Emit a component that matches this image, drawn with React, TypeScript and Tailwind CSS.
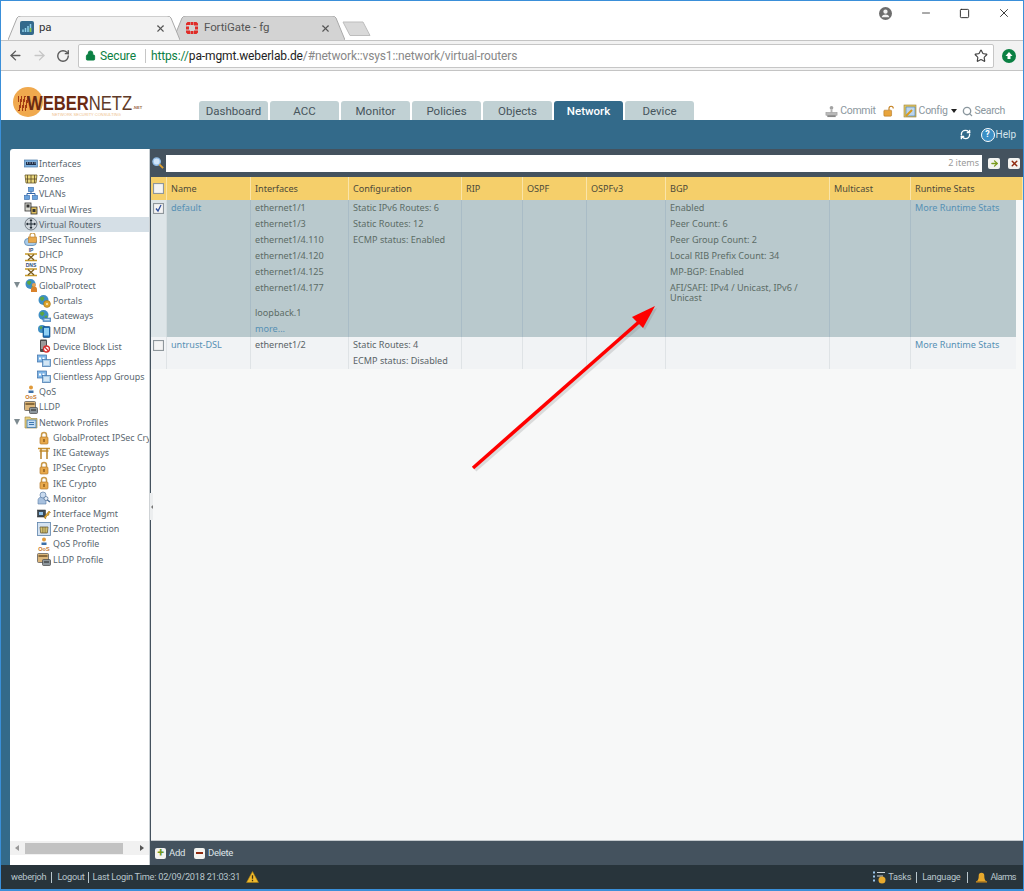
import { ArrowLeft, ArrowRight, Lock, RotateCw, Star, X, Minus, Square, Search, RefreshCw } from 'lucide-react';
import type { ReactNode } from 'react';

const COLS = [
  { label: 'Name', w: 'w-[84px]' },
  { label: 'Interfaces', w: 'w-[98px]' },
  { label: 'Configuration', w: 'w-[113px]' },
  { label: 'RIP', w: 'w-[61px]' },
  { label: 'OSPF', w: 'w-[64px]' },
  { label: 'OSPFv3', w: 'w-[79px]' },
  { label: 'BGP', w: 'w-[164px]' },
  { label: 'Multicast', w: 'w-[81px]' },
  { label: 'Runtime Stats', w: 'flex-1' },
];

const TABS = ['Dashboard', 'ACC', 'Monitor', 'Policies', 'Objects', 'Network', 'Device'];

type Kind =
  | 'nic' | 'zone' | 'vlan' | 'wire' | 'router' | 'ipsec' | 'dhcp' | 'dns' | 'gp' | 'portal' | 'gateway' | 'mdm'
  | 'block' | 'apps' | 'qos' | 'lldp' | 'profiles' | 'lock' | 'torii' | 'monitor' | 'mgmt' | 'shield';

const TREE: { label: string; kind: Kind; level?: number; open?: boolean; active?: boolean }[] = [
  { label: 'Interfaces', kind: 'nic' },
  { label: 'Zones', kind: 'zone' },
  { label: 'VLANs', kind: 'vlan' },
  { label: 'Virtual Wires', kind: 'wire' },
  { label: 'Virtual Routers', kind: 'router', active: true },
  { label: 'IPSec Tunnels', kind: 'ipsec' },
  { label: 'DHCP', kind: 'dhcp' },
  { label: 'DNS Proxy', kind: 'dns' },
  { label: 'GlobalProtect', kind: 'gp', open: true },
  { label: 'Portals', kind: 'portal', level: 1 },
  { label: 'Gateways', kind: 'gateway', level: 1 },
  { label: 'MDM', kind: 'mdm', level: 1 },
  { label: 'Device Block List', kind: 'block', level: 1 },
  { label: 'Clientless Apps', kind: 'apps', level: 1 },
  { label: 'Clientless App Groups', kind: 'apps', level: 1 },
  { label: 'QoS', kind: 'qos' },
  { label: 'LLDP', kind: 'lldp' },
  { label: 'Network Profiles', kind: 'profiles', open: true },
  { label: 'GlobalProtect IPSec Crypto', kind: 'lock', level: 1 },
  { label: 'IKE Gateways', kind: 'torii', level: 1 },
  { label: 'IPSec Crypto', kind: 'lock', level: 1 },
  { label: 'IKE Crypto', kind: 'lock', level: 1 },
  { label: 'Monitor', kind: 'monitor', level: 1 },
  { label: 'Interface Mgmt', kind: 'mgmt', level: 1 },
  { label: 'Zone Protection', kind: 'shield', level: 1 },
  { label: 'QoS Profile', kind: 'qos', level: 1 },
  { label: 'LLDP Profile', kind: 'lldp', level: 1 },
];

function TreeIcon({ kind }: { kind: Kind }) {
  const globe = (
    <>
      <circle cx="6.5" cy="6" r="5" fill="#3f8fc4" />
      <path d="M3 3.5l3-1 1.5 2-2 2.500-2-1zM7.500 7l2.500-.5.5 2-2 1.500z" fill="#5da63f" />
    </>
  );
  const lockShape = (
    <>
      <path d="M4.500 6V4a2.500 2.500 0 0 1 5 0v2" fill="none" stroke="#c99a4a" strokeWidth="1.500" />
      <rect x="3" y="6" width="8" height="7" rx="1" fill="#e8a94c" stroke="#b57a2a" strokeWidth=".7" />
      <rect x="6.300" y="8" width="1.400" height="3" fill="#8a5a1c" />
    </>
  );
  const body: Record<Kind, ReactNode> = {
    nic: (
      <>
        <rect x=".5" y="3" width="13" height="7" fill="#7fb0dc" stroke="#4a7aa8" strokeWidth=".7" />
        <rect x="2" y="5" width="10" height="3" fill="#1f2f4a" />
        <path d="M3 6h1M5.500 6h1M8 6h1M10.500 6h1" stroke="#dfe8f0" strokeWidth="1" />
      </>
    ),
    zone: (
      <>
        <path d="M1 3h12l-1 8H2z" fill="#e9d77c" stroke="#6b5a2a" strokeWidth=".8" />
        <path d="M3.500 3v8M7 3v8M10.500 3v8M1.500 7h11" stroke="#5a4a2a" strokeWidth=".8" />
      </>
    ),
    vlan: (
      <>
        <rect x="4.500" y="0.500" width="5" height="4" fill="#6ba3dc" stroke="#2f64a8" strokeWidth=".6" />
        <rect x=".5" y="8.500" width="5" height="4" fill="#6ba3dc" stroke="#2f64a8" strokeWidth=".6" />
        <rect x="8.500" y="8.500" width="5" height="4" fill="#6ba3dc" stroke="#2f64a8" strokeWidth=".6" />
        <path d="M7 4.500v2M3 8.500v-2h8v2" fill="none" stroke="#2f64a8" />
      </>
    ),
    wire: (
      <>
        <rect x="1" y="1" width="6" height="8" fill="#d8d8d0" stroke="#333" strokeWidth=".8" />
        <rect x="7" y="5" width="6" height="7" fill="#e0c060" stroke="#333" strokeWidth=".8" />
        <rect x="2.500" y="2.500" width="3" height="3" fill="#333" />
        <rect x="8.500" y="7" width="3" height="3" fill="#333" />
      </>
    ),
    router: (
      <>
        <circle cx="7" cy="7" r="6" fill="#cfd6dc" stroke="#59636c" strokeWidth=".8" />
        <path d="M7 2.500v9M2.500 7h9" stroke="#1f2a33" strokeWidth="1" />
        <path d="M7 2l-1.500 2h3zM7 12l-1.500-2h3zM2 7l2-1.500v3zM12 7l-2-1.500v3z" fill="#1f2a33" />
      </>
    ),
    ipsec: (
      <>
        <rect x=".5" y="5.500" width="12" height="7" rx="3.500" fill="#a9cbe8" stroke="#5a86b0" strokeWidth=".8" />
        <path d="M6 4V2.500a2.500 2.500 0 0 1 5 0V4" fill="none" stroke="#c99a4a" strokeWidth="1.200" />
        <rect x="4.500" y="4" width="8" height="5.500" fill="#e8a94c" stroke="#b57a2a" strokeWidth=".6" />
      </>
    ),
    dhcp: (
      <>
        <text x="7" y="4.300" fontSize="5" textAnchor="middle" fill="#2f4f7a" fontFamily="Liberation Sans" fontWeight="700">IP</text>
        <path d="M1 6h12M1 12.500h12" stroke="#c79a2a" strokeWidth="1.400" />
        <path d="M4 6.500l6 5.500M10 6.500l-6 5.500" stroke="#7a5c1c" strokeWidth="1.300" />
      </>
    ),
    dns: (
      <>
        <text x="7" y="4.300" fontSize="5" textAnchor="middle" fill="#2f4f7a" fontFamily="Liberation Sans" fontWeight="700">DNS</text>
        <path d="M1 6h12M1 12.500h12" stroke="#c79a2a" strokeWidth="1.400" />
        <path d="M4 6.500l6 5.500M10 6.500l-6 5.500" stroke="#7a5c1c" strokeWidth="1.300" />
      </>
    ),
    gp: (
      <>
        {globe}
        <circle cx="10" cy="7" r="2" fill="#e6a05a" />
        <path d="M7 14v-2.500a3 3 0 0 1 6 0V14z" fill="#d9822b" />
      </>
    ),
    portal: (
      <>
        {globe}
        <circle cx="10" cy="10" r="3.400" fill="#e0a52c" stroke="#9a6d14" strokeWidth=".6" />
        <circle cx="10" cy="10" r="1" fill="#fbeec0" />
      </>
    ),
    gateway: (
      <>
        {globe}
        <rect x="6" y="9" width="8" height="3.500" fill="#6da7d9" stroke="#3d6fa8" strokeWidth=".6" />
        <path d="M7.500 10.700h5" stroke="#fff" strokeWidth=".8" />
      </>
    ),
    mdm: (
      <>
        <circle cx="5" cy="5" r="4" fill="#3f8fc4" />
        <path d="M2.500 3l2-1 1 2-2 1.500z" fill="#5da63f" />
        <rect x="6" y="2.500" width="7" height="11" rx="1" fill="#1d6fb8" stroke="#0f3f6f" strokeWidth=".6" />
        <rect x="7" y="4" width="5" height="7.500" fill="#8fd0f5" />
      </>
    ),
    block: (
      <>
        <rect x="3" y="0.500" width="7" height="12.500" rx="1" fill="#4b4b4b" />
        <rect x="4" y="2" width="5" height="8" fill="#9a9a9a" />
        <circle cx="9.500" cy="10" r="3" fill="#fff" stroke="#d62f2f" strokeWidth="1.300" />
        <path d="M7.500 8l4 4" stroke="#d62f2f" strokeWidth="1.200" />
      </>
    ),
    apps: (
      <>
        <rect x=".5" y="1" width="9" height="7" fill="#7fb5e6" stroke="#3d6fa8" strokeWidth=".7" />
        <path d="M2 3.500h2v2H2zM5.500 3.500h2v2h-2z" fill="#fff" />
        <rect x="5.500" y="5.500" width="8" height="7" fill="#a8cdea" stroke="#3d6fa8" strokeWidth=".7" />
        <path d="M7 8h5M7 10h5" stroke="#fff" />
      </>
    ),
    qos: (
      <>
        <circle cx="7" cy="2.500" r="2" fill="#e09a3a" />
        <path d="M4.500 8V5.500h5V8z" fill="#3d6fa8" />
        <text x="7" y="13.500" fontSize="5.500" textAnchor="middle" fill="#c9761f" fontFamily="Liberation Sans" fontWeight="700">QoS</text>
      </>
    ),
    lldp: (
      <>
        <rect x=".5" y="1.500" width="11" height="9" rx="1" fill="#dcb67a" stroke="#5f5f5f" strokeWidth=".8" />
        <rect x="1.500" y="3" width="9" height="2" fill="#8a6a3a" />
        <rect x="5.500" y="7.500" width="8" height="6" rx="1" fill="#8d969c" stroke="#444" strokeWidth=".7" />
        <path d="M7 10h5" stroke="#222" />
      </>
    ),
    profiles: (
      <>
        <path d="M1 2h5l1 1.500h6V13H1z" fill="#e8cf7c" stroke="#9a8136" strokeWidth=".6" />
        <rect x="3" y="5" width="9" height="7.500" fill="#c4dcf2" stroke="#3d78b0" strokeWidth=".8" />
        <path d="M5 7.500h5M5 9.500h5" stroke="#3d78b0" />
      </>
    ),
    lock: lockShape,
    torii: (
      <>
        <path d="M1 2.500h12M2.500 5h9" stroke="#c9912f" strokeWidth="1.400" />
        <path d="M4 2v11M10 2v11" stroke="#b98228" strokeWidth="1.500" />
      </>
    ),
    monitor: (
      <>
        <path d="M1 13v-2.500a4 4 0 0 1 8-1V13z" fill="#a7c0de" stroke="#5d7ea6" strokeWidth=".6" />
        <circle cx="6" cy="4" r="3" fill="#c9daee" stroke="#5d7ea6" strokeWidth=".7" />
        <path d="M9 8l4 3" stroke="#4a6a92" strokeWidth="1.500" />
        <circle cx="9" cy="7.500" r="2" fill="#e5eef8" stroke="#4a6a92" strokeWidth=".7" />
      </>
    ),
    mgmt: (
      <>
        <rect x=".5" y="3" width="8" height="7" fill="#3d4a55" stroke="#222" strokeWidth=".5" />
        <rect x="2" y="5" width="4" height="3" fill="#8fc0e8" />
        <path d="M7 10l5-6 1.500 1.500-2 1 .5 1.500-1.500.5L9 10l-.5 2z" fill="#e0a52c" stroke="#8a6214" strokeWidth=".5" />
      </>
    ),
    shield: (
      <>
        <rect x=".5" y=".5" width="13" height="13" fill="#d5e3f1" stroke="#5d82ab" strokeWidth=".8" />
        <path d="M3 5h8l-.7 6H3.700z" fill="#e9d77c" stroke="#5a4a2a" strokeWidth=".7" />
        <path d="M5.300 5v6M7 5v6M8.800 5v6" stroke="#5a4a2a" strokeWidth=".6" />
      </>
    ),
  };
  return (
    <svg viewBox="0 0 14 14" className="w-[14px] h-[14px] shrink-0">
      {body[kind]}
    </svg>
  );
}

function TreeRow({ label, kind, level, open, active }: (typeof TREE)[number]) {
  return (
    <div className={`h-[15.23px] flex items-center whitespace-nowrap ${level ? 'pl-[27px]' : 'pl-[14px]'} ${active ? 'bg-[#d5dfe6]' : ''}`}>
      {open ? (
        <span className="w-0 h-0 -ml-[10px] mr-[4px] border-x-[3px] border-t-[6px] border-x-transparent border-t-[#7d8a90]" />
      ) : null}
      <TreeIcon kind={kind} />
      <span className={`${level ? 'ml-[2px]' : 'ml-px'} text-[8.900px] text-[#5a6770]`}>{label}</span>
    </div>
  );
}

function BrowserTab({ active, icon, label }: { active?: boolean; icon: ReactNode; label: string }) {
  return (
    <div className={`relative w-[172px] h-[24px] flex items-center pl-[12px] pr-[14px] ${active ? 'z-10' : '-ml-[7px]'}`}>
      <svg className="absolute inset-0 w-full h-full" viewBox="0 0 172 24" preserveAspectRatio="none">
        <path
          d="M0 24 L9 2 Q10 0 13 0 H159 Q162 0 163 2 L172 24"
          fill={active ? '#f2f2f2' : '#d3d3d3'}
          stroke="#a9a9a9"
          strokeWidth="1"
        />
      </svg>
      <span className="relative">{icon}</span>
      <span className={`relative ml-[5px] flex-1 text-[11.500px] tracking-[-0.1px] font-['Roboto',sans-serif] ${active ? 'text-[#333]' : 'text-[#555]'}`}>{label}</span>
      <X className="relative w-[11px] h-[11px] text-[#555]" strokeWidth={2.4} />
    </div>
  );
}

function Check({ on }: { on?: boolean }) {
  return (
    <span className="w-[11px] h-[11px] bg-[#f4f4f4] border border-[#8f979c] flex items-center justify-center shadow-[inset_0_0_1px_#999]">
      {on ? (
        <svg viewBox="0 0 9 9" className="w-[9px] h-[9px]">
          <path d="M2 4.500l2 2.500 3-6" fill="none" stroke="#2f4f9c" strokeWidth="1.300" />
        </svg>
      ) : null}
    </span>
  );
}

function Cell({ w, className, children }: { w: string; className?: string; children?: ReactNode }) {
  return <div className={`${w} pl-[4px] pr-[6px] border-r h-full ${className ?? ''}`}>{children}</div>;
}

function Line({ link, className, children }: { link?: boolean; className?: string; children: ReactNode }) {
  return <div className={`h-[16px] leading-[16px] whitespace-nowrap ${link ? 'text-[#5690b4]' : ''} ${className ?? ''}`}>{children}</div>;
}

export default function App() {
  return (
    <div className="relative w-[1024px] h-[891px] overflow-hidden bg-white border-t border-x border-[#3a8fd9] border-b-2 font-['Noto_Sans',sans-serif] flex flex-col">
      {/* Browser tab strip */}
      <div className="h-[39px] shrink-0 relative flex items-end pl-[7px] bg-white">
        <BrowserTab
          active
          label="pa"
          icon={
            <svg viewBox="0 0 14 14" className="w-[14px] h-[14px]">
              <rect width="14" height="14" rx="2" fill="#34698c" />
              <path d="M3 11V8.500M5.500 11V7M8 11V5M10.500 11V3" stroke="#8fd0e8" strokeWidth="1.500" />
              <path d="M10.500 7v4" stroke="#8dc63f" strokeWidth="1.500" />
            </svg>
          }
        />
        <BrowserTab
          label="FortiGate - fg"
          icon={
            <svg viewBox="0 0 14 14" className="w-[14px] h-[14px]">
              <path d="M1 4.500V2.500L2.500 1H5v3H2zM9 1h2.500L13 2.500v2H9zM5.500 1h3v3h-3zM1 5.500h3v3H1zM10 5.500h3v3h-3zM1 9.500h4v3.500H2.500L1 11.500zM5.500 10h3v3h-3zM9 9.500h4v2L11.500 13H9z" fill="#e02b27" />
            </svg>
          }
        />
        <svg viewBox="0 0 30 16" className="w-[30px] h-[16px] mb-[3px] -ml-[3px]">
          <path d="M1 1h20l7 13.500H8z" fill="#d9d9d9" stroke="#bdbdbd" strokeLinejoin="round" />
        </svg>
        {/* Window controls */}
        <div className="absolute right-[12px] top-[5px] flex items-center text-[#555]">
          <svg viewBox="0 0 14 14" className="w-[13px] h-[13px] mr-[28px]">
            <circle cx="7" cy="7" r="7" fill="#6d6d6d" />
            <circle cx="7" cy="5" r="2.300" fill="#f2f2f2" />
            <path d="M2.800 11c.6-2 2.400-2.800 4.200-2.800s3.600.8 4.200 2.800z" fill="#f2f2f2" />
          </svg>
          <Minus className="w-[12px] h-[12px] mr-[27px]" />
          <Square className="w-[11px] h-[11px] mr-[27px] text-[#222]" strokeWidth={2} />
          <X className="w-[14px] h-[14px] text-[#222]" strokeWidth={1.5} />
        </div>
      </div>

      {/* Browser toolbar */}
      <div className="h-[31px] shrink-0 bg-[#f2f2f2] border-y border-[#c4c4c4] flex items-center pl-[7px] pr-[7px]">
        <ArrowLeft className="w-[15px] h-[15px] text-[#5a5a5a]" strokeWidth={2.2} />
        <ArrowRight className="w-[15px] h-[15px] ml-[9px] text-[#c6c6c6]" strokeWidth={2.2} />
        <RotateCw className="w-[14px] h-[14px] ml-[9px] text-[#5a5a5a]" strokeWidth={2.4} />
        <div className="ml-[8px] flex-1 h-[24px] bg-white border border-[#c6c6c6] rounded-[2px] flex items-center pl-[6px] pr-[5px] font-['Roboto',sans-serif] text-[12px] tracking-[-0.13px]">
          <Lock className="w-[11px] h-[11px] text-[#0b8043]" fill="#0b8043" />
          <span className="ml-[4px] text-[#0b8043]">Secure</span>
          <span className="ml-[9px] mr-[5px] w-px h-[14px] bg-[#c6c6c6]" />
          <span className="text-[#0b8043]">https://</span>
          <span className="text-[#222]">pa-mgmt.weberlab.de</span>
          <span className="text-[#888]">/#network::vsys1::network/virtual-routers</span>
          <Star className="ml-auto w-[14px] h-[14px] text-[#444]" strokeWidth={2} />
        </div>
        <svg viewBox="0 0 14 14" className="ml-[8px] w-[14px] h-[14px]">
          <circle cx="7" cy="7" r="7" fill="#0b8043" />
          <path d="M7 3l3.500 4H8.500v3h-3V7H3.500z" fill="#fff" />
        </svg>
      </div>

      {/* App header */}
      <div className="h-[49px] shrink-0 flex items-end relative">
        <div className="w-[198px] shrink-0 pl-[12px] self-end relative">
          <div className="relative h-[34px]">
            <div className="absolute left-0 top-[1px] w-[30px] h-[30px] rounded-full bg-[#f0a94e]" />
            <div className="absolute left-[5px] top-[10px] h-[15px] w-[10px] bg-[repeating-linear-gradient(100deg,#a43a12_0_1.500px,transparent_1.500px_3px)]" />
            <div className="absolute left-[14px] top-[6px] text-[21px] leading-[21px] font-['Liberation_Sans',sans-serif] whitespace-nowrap scale-x-[.79] origin-left">
              <span className="font-bold text-[#6a2a12]">WEBER</span>
              <span className="text-[#5f3a28]">NETZ</span>
            </div>
            <div className="absolute left-[120px] top-[19px] text-[4px] leading-[5px] text-[#9a6a4a] font-bold font-['Liberation_Sans',sans-serif]">.NET</div>
            <div className="absolute left-[39px] top-[26px] text-[4px] leading-[5px] text-[#eec08a] font-['Liberation_Sans',sans-serif] whitespace-nowrap">
              NETWORK SECURITY CONSULTING
            </div>
          </div>
        </div>
        <div className="flex items-end gap-[2px] font-['Roboto',sans-serif]">
          {TABS.map((t) => (
            <div
              key={t}
              className={`w-[69px] h-[19px] pt-[2px] rounded-t-[3px] flex items-center justify-center text-[11.500px] ${
                t === 'Network' ? 'bg-[#336a8a] text-white font-medium' : 'bg-[#c1d1d4] text-[#47555c]'
              }`}
            >
              {t}
            </div>
          ))}
        </div>
        <div className="ml-auto mr-[18px] mb-[1px] flex items-center text-[10.500px] tracking-[-0.3px] text-[#8b979e] font-['Roboto',sans-serif]">
          <svg viewBox="0 0 14 14" className="w-[13px] h-[13px]">
            <circle cx="7" cy="3" r="2" fill="#a3a3a3" />
            <path d="M6 5h2v3H6z" fill="#b5b5b5" />
            <rect x="1" y="8" width="12" height="3" fill="#b9b9b9" stroke="#8a8a8a" strokeWidth=".5" />
            <rect x="2.500" y="11" width="9" height="2" fill="#888" />
          </svg>
          <span className="ml-[2px]">Commit</span>
          <svg viewBox="0 0 14 14" className="ml-[7px] w-[12px] h-[12px]">
            <path d="M7 6V4a2.500 2.500 0 0 1 5 0" fill="none" stroke="#c47f1c" strokeWidth="1.300" />
            <rect x="1" y="6" width="9" height="7" rx="1" fill="#e8a43c" stroke="#a66a14" strokeWidth=".6" />
          </svg>
          <svg viewBox="0 0 14 14" className="ml-[8px] w-[14px] h-[14px]">
            <rect x="1" y="1" width="12" height="12" fill="#e6c860" stroke="#9a8136" strokeWidth=".6" />
            <rect x="3" y="3" width="9" height="9" fill="#bcd6ee" stroke="#3d78b0" strokeWidth=".6" />
            <path d="M3 12l6-6" stroke="#d99a1c" strokeWidth="2" />
          </svg>
          <span className="ml-[2px]">Config</span>
          <span className="ml-[3px] w-0 h-0 border-x-[3.500px] border-t-[4px] border-x-transparent border-t-[#222]" />
          <Search className="ml-[5px] w-[11px] h-[11px] text-[#8b979e]" strokeWidth={3} />
          <span className="ml-[2px]">Search</span>
        </div>
      </div>

      {/* Blue bar */}
      <div className="h-[29px] shrink-0 bg-[#336a8a] flex items-center justify-end pr-[7px] text-white font-['Roboto',sans-serif] text-[10px]">
        <RefreshCw className="w-[11px] h-[11px] mr-[10px]" strokeWidth={3} />
        <span className="w-[14px] h-[14px] rounded-full bg-[#3b8ec4] border border-white flex items-center justify-center text-[9px] font-bold mr-[1px]">?</span>
        <span className="text-[#d6e4ec]">Help</span>
      </div>

      {/* Body */}
      <div className="flex-1 min-h-0 flex bg-[#336a8a] pl-[9px]">
        {/* Sidebar */}
        <aside className="w-[140px] shrink-0 bg-white border-r border-[#c9cfd3] rounded-tl-[3px] flex flex-col relative">
          <div className="flex-1 pt-[7px] overflow-hidden">
            {TREE.map((r) => (
              <TreeRow key={r.label} {...r} />
            ))}
          </div>
          <div className="h-[14px] mb-[10px] flex items-center px-[5px] bg-[#f1f1f1]">
            <span className="w-0 h-0 border-y-[3px] border-r-[4px] border-y-transparent border-r-[#999]" />
            <span className="ml-[6px] w-[98px] h-[11px] bg-[#c2c2c2]" />
            <span className="ml-auto w-0 h-0 border-y-[3px] border-l-[4px] border-y-transparent border-l-[#555]" />
          </div>
          <span className="absolute -right-[4px] top-[344px] z-10 w-[4px] h-[27px] bg-[#eceeef] border-l border-[#cfd3d6] flex items-center justify-center">
            <span className="w-0 h-0 border-y-[2px] border-r-[2px] border-y-transparent border-r-[#777]" />
          </span>
        </aside>

        {/* Main column */}
        <main className="flex-1 min-w-0 flex flex-col bg-[#44525e] pl-[1px]">
          <div className="h-[28px] shrink-0 flex items-center pl-[1px] pr-[3px]">
            <svg viewBox="0 0 13 13" className="w-[12px] h-[12px] shrink-0">
              <circle cx="5" cy="5" r="4" fill="#cfe4f8" stroke="#8fbbe6" strokeWidth="1.500" />
              <path d="M8 8l4 4" stroke="#e0a030" strokeWidth="2" />
            </svg>
            <div className="ml-[2px] flex-1 h-[17px] bg-white flex items-center justify-end pr-[3px] text-[9px] text-[#9a9a9a]">
              2 items
            </div>
            <span className="ml-[6px] w-[12px] h-[11px] rounded-[2px] bg-[#f3f3f0] flex items-center justify-center">
              <ArrowRight className="w-[9px] h-[9px] text-[#7a9a1c]" strokeWidth={3.5} />
            </span>
            <span className="ml-[8px] w-[12px] h-[11px] rounded-[2px] bg-[#f3f3f0] flex items-center justify-center">
              <X className="w-[9px] h-[9px] text-[#8f2a10]" strokeWidth={4} />
            </span>
          </div>

          <div className="flex-1 min-h-0 bg-[#f7f8f8] text-[9.100px] text-[#5e6b6d]">
            {/* Header row */}
            <div className="h-[23px] flex bg-[#f5cf6a] text-[#4c4a3a] items-stretch">
              <div className="w-[16px] border-r border-[#fae4a8] flex items-center justify-center">
                <Check />
              </div>
              {COLS.map((c) => (
                <div key={c.label} className={`${c.w} pl-[4px] border-r border-[#fae4a8] flex items-center`}>
                  {c.label}
                </div>
              ))}
            </div>

            {/* default */}
            <div className="h-[137px] flex mr-[7px] bg-[#b9c9cd] text-[#5c6c66]">
              <div className="w-[16px] bg-[#dde5e8] border-r border-[#d3dcdf] pt-[3px] flex justify-center h-full">
                <Check on />
              </div>
              <Cell w="w-[84px]" className="border-[#a9bcc6]">
                <Line link>default</Line>
              </Cell>
              <Cell w="w-[98px]" className="border-[#a9bcc6]">
                <Line>ethernet1/1</Line>
                <Line>ethernet1/3</Line>
                <Line>ethernet1/4.110</Line>
                <Line>ethernet1/4.120</Line>
                <Line>ethernet1/4.125</Line>
                <Line>ethernet1/4.177</Line>
                <Line className="mt-[9px]">loopback.1</Line>
                <Line link>more...</Line>
              </Cell>
              <Cell w="w-[113px]" className="border-[#a9bcc6]">
                <Line>Static IPv6 Routes: 6</Line>
                <Line>Static Routes: 12</Line>
                <Line>ECMP status: Enabled</Line>
              </Cell>
              <Cell w="w-[61px]" className="border-[#a9bcc6]" />
              <Cell w="w-[64px]" className="border-[#a9bcc6]" />
              <Cell w="w-[79px]" className="border-[#a9bcc6]" />
              <Cell w="w-[164px]" className="border-[#a9bcc6] pr-[20px]">
                <Line>Enabled</Line>
                <Line>Peer Count: 6</Line>
                <Line>Peer Group Count: 2</Line>
                <Line>Local RIB Prefix Count: 34</Line>
                <Line>MP-BGP: Enabled</Line>
                <div className="leading-[9.500px] pt-[3px]">AFI/SAFI: IPv4 / Unicast, IPv6 / Unicast</div>
              </Cell>
              <Cell w="w-[81px]" className="border-[#a9bcc6]" />
              <Cell w="flex-1" className="border-transparent">
                <Line link>More Runtime Stats</Line>
              </Cell>
            </div>

            {/* untrust-DSL */}
            <div className="h-[32px] flex mr-[7px] bg-[#f1f3f5] text-[#5a6468]">
              <div className="w-[16px] border-r border-[#dfe3e6] pt-[3px] flex justify-center h-full">
                <Check />
              </div>
              <Cell w="w-[84px]" className="border-[#dfe3e6]">
                <Line link>untrust-DSL</Line>
              </Cell>
              <Cell w="w-[98px]" className="border-[#dfe3e6]">
                <Line>ethernet1/2</Line>
              </Cell>
              <Cell w="w-[113px]" className="border-[#dfe3e6]">
                <Line>Static Routes: 4</Line>
                <Line>ECMP status: Disabled</Line>
              </Cell>
              <Cell w="w-[61px]" className="border-[#dfe3e6]" />
              <Cell w="w-[64px]" className="border-[#dfe3e6]" />
              <Cell w="w-[79px]" className="border-[#dfe3e6]" />
              <Cell w="w-[164px]" className="border-[#dfe3e6]" />
              <Cell w="w-[81px]" className="border-[#dfe3e6]" />
              <Cell w="flex-1" className="border-transparent">
                <Line link>More Runtime Stats</Line>
              </Cell>
            </div>
          </div>

          {/* Bottom toolbar */}
          <div className="h-[25px] shrink-0 border-t border-[#c5cace] flex items-center pl-[4px] text-[9.500px] tracking-[-0.3px] text-[#dfe5e8] font-['Roboto',sans-serif]">
            <span className="w-[11px] h-[11px] rounded-[2px] bg-[#f3f3f0] flex items-center justify-center text-[#6f9a1c] text-[12px] leading-none font-bold">+</span>
            <span className="ml-[3px]">Add</span>
            <span className="ml-[9px] w-[11px] h-[11px] rounded-[2px] bg-[#f3f3f0] flex items-center justify-center">
              <span className="w-[7px] h-[2px] bg-[#8f2a10]" />
            </span>
            <span className="ml-[3px]">Delete</span>
          </div>
        </main>
      </div>

      {/* Status bar */}
      <div className="h-[24px] shrink-0 bg-[#28343b] flex items-center pl-[10px] pr-[7px] text-[9.200px] tracking-[-0.25px] text-[#b9c6cc] font-['Roboto',sans-serif]">
        <span>weberjoh</span>
        <span className="mx-[5px] w-px h-[11px] bg-[#b9c6cc]" />
        <span>Logout</span>
        <span className="ml-[3px] mr-[4px] w-px h-[11px] bg-[#b9c6cc]" />
        <span>Last Login Time: 02/09/2018 21:03:31</span>
        <svg viewBox="0 0 14 13" className="ml-[6px] w-[13px] h-[12px]">
          <path d="M7 .5L13.500 12.500H.5z" fill="#f0b92c" stroke="#a97f10" strokeWidth=".6" />
          <path d="M7 4.500v4M7 9.500v1.500" stroke="#3a2f10" strokeWidth="1.400" />
        </svg>
        <svg viewBox="0 0 14 13" className="ml-auto w-[14px] h-[13px]">
          <path d="M1 1.500h2M1 5.500h2M1 9.500h2" stroke="#9cc6ec" strokeWidth="2" />
          <path d="M5 1.500h8M5 5h6" stroke="#cfd6da" />
          <circle cx="10" cy="9" r="3.500" fill="#e8a92c" />
        </svg>
        <span className="ml-[2px]">Tasks</span>
        <span className="mx-[5px] w-px h-[11px] bg-[#b9c6cc]" />
        <span>Language</span>
        <span className="mx-[7px] w-px h-[11px] bg-[#b9c6cc]" />
        <svg viewBox="0 0 14 13" className="w-[13px] h-[12px]">
          <path d="M2 11c1.500-1 2-3 2-6a3 3 0 0 1 6 0c0 3 .5 5 2 6z" fill="#e8a92c" />
          <rect x="1" y="11" width="12" height="1.500" fill="#c98a1c" />
        </svg>
        <span className="ml-[2px] tracking-[-0.6px]">Alarms</span>
      </div>

      {/* Annotation arrow */}
      <svg className="absolute -left-px -top-px w-[1024px] h-[891px] pointer-events-none" viewBox="0 0 1024 891">
        <path d="M473 468 L638 323" stroke="#888" strokeWidth="4" opacity=".25" transform="translate(2 2)" />
        <path d="M655 306 L632 317 L643 328 Z" fill="#888" opacity=".3" transform="translate(2 2)" />
        <path d="M473 468 L640 321" stroke="#ff0000" strokeWidth="3.500" />
        <path d="M655 306 L632 317 L643 328 Z" fill="#ff0000" />
      </svg>
    </div>
  );
}
